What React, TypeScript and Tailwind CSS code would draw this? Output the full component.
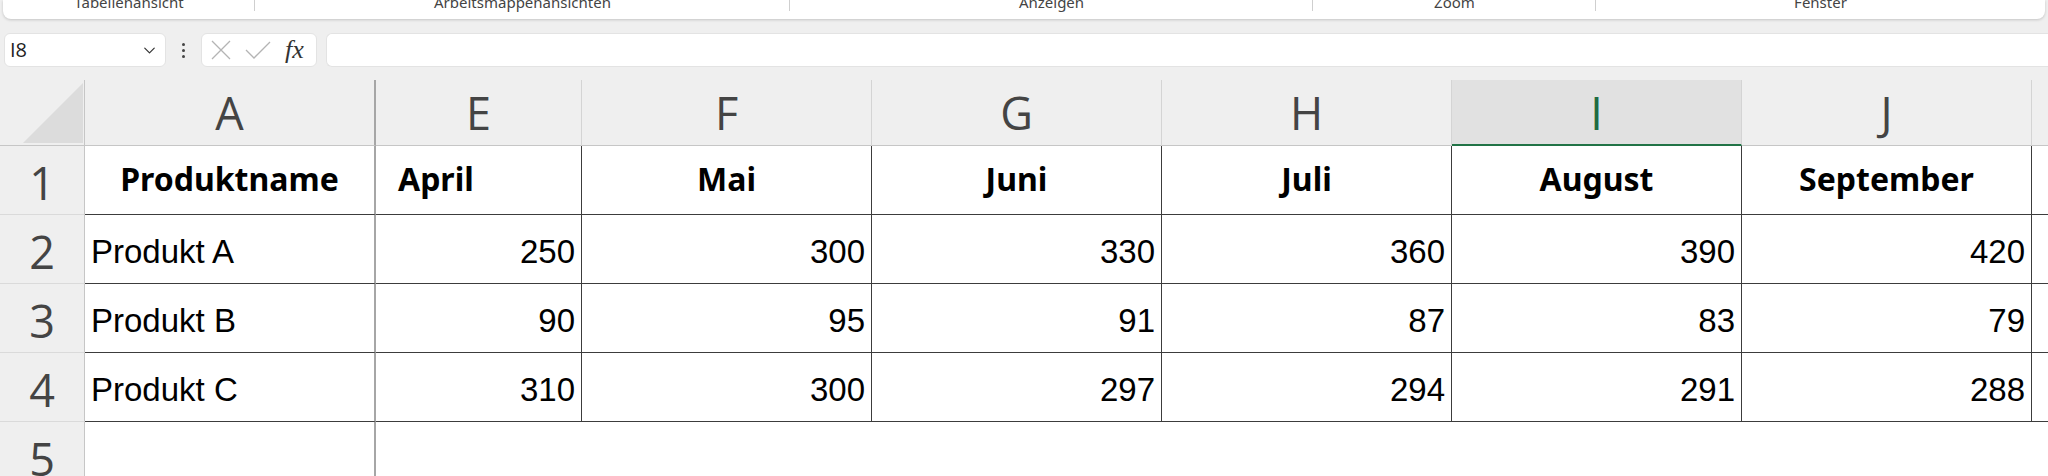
import { ChevronDown } from 'lucide-react';

const cols = [
  { key: 'A', w: 'w-[291px]', sep: 'border-r-2 border-r-[#a6a6a6]' },
  { key: 'E', w: 'w-[206px]', sep: 'border-r border-r-[#d4d4d4]' },
  { key: 'F', w: 'w-[290px]', sep: 'border-r border-r-[#d4d4d4]' },
  { key: 'G', w: 'w-[290px]', sep: 'border-r border-r-[#d4d4d4]' },
  { key: 'H', w: 'w-[290px]', sep: 'border-r border-r-[#d4d4d4]' },
  { key: 'I', w: 'w-[290px]', sep: 'border-r border-r-[#d4d4d4]' },
  { key: 'J', w: 'w-[290px]', sep: 'border-r border-r-[#d4d4d4]' },
];

const months = ['April', 'Mai', 'Juni', 'Juli', 'August', 'September'];

const rows = [
  { name: 'Produkt A', values: [250, 300, 330, 360, 390, 420] },
  { name: 'Produkt B', values: [90, 95, 91, 87, 83, 79] },
  { name: 'Produkt C', values: [310, 300, 297, 294, 291, 288] },
];

const groups = [
  { label: 'Tabellenansicht', w: 'w-[252px]' },
  { label: 'Arbeitsmappenansichten', w: 'w-[535px]' },
  { label: 'Anzeigen', w: 'w-[523px]' },
  { label: 'Zoom', w: 'w-[283px]' },
  { label: 'Fenster', w: 'flex-1' },
];

const cellFont = "font-['Liberation_Sans',Arial,sans-serif] text-[33px] leading-none text-black";
const headFont = "font-['Open_Sans',sans-serif] text-[45px] leading-none";
const boldFont = "font-['Noto_Sans',sans-serif] text-[32px] font-bold leading-none text-black";

function RowHeader({ n, last }: { n: number; last?: boolean }) {
  return (
    <div
      className={`flex w-[85px] shrink-0 items-center justify-center border-r border-r-[#c6c6c6] bg-[#efefef] pt-1 text-[#444] ${headFont} ${
        last ? '' : 'border-b border-b-[#dadada]'
      }`}
    >
      {n}
    </div>
  );
}

export default function App() {
  return (
    <div className="flex h-[476px] w-[2048px] flex-col overflow-hidden bg-[#efefef]">
      {/* ribbon group labels, cut off at the top */}
      <div className="mx-[3px] flex h-[19px] shrink-0 overflow-hidden rounded-b-lg bg-white shadow-[0_1px_3px_rgba(0,0,0,0.18)]">
        {groups.map((g, i) => (
          <div key={g.label} className={`relative flex h-full justify-center ${g.w}`}>
            <span className="-mt-[5px] font-['Noto_Sans',sans-serif] text-[15px] leading-[15px] text-[#444]">
              {g.label}
            </span>
            {i < groups.length - 1 && <div className="absolute right-0 top-0 h-[11px] w-px bg-[#cfcfcf]" />}
          </div>
        ))}
      </div>

      {/* formula bar */}
      <div className="mt-[14px] flex h-[34px] shrink-0 items-stretch pl-[4px]">
        <div className="flex w-[162px] items-center justify-between rounded-md border border-[#e3e3e3] bg-white pl-[5px] pr-[6px]">
          <span className="font-['Open_Sans',sans-serif] text-[20px] text-[#222]">I8</span>
          <ChevronDown size={19} strokeWidth={1.5} className="text-[#333]" />
        </div>
        <div className="flex w-[35px] flex-col items-center justify-center gap-[3px]">
          <span className="h-[3px] w-[3px] rounded-full bg-[#444]" />
          <span className="h-[3px] w-[3px] rounded-full bg-[#444]" />
          <span className="h-[3px] w-[3px] rounded-full bg-[#444]" />
        </div>
        <div className="flex w-[116px] items-center gap-[14px] rounded-md border border-[#e3e3e3] bg-white pl-[9px]">
          <svg width="20" height="20" viewBox="0 0 20 20" className="text-[#b4b4b4]">
            <path d="M1 1 L19 19 M19 1 L1 19" stroke="currentColor" strokeWidth="1.3" fill="none" />
          </svg>
          <svg width="26" height="18" viewBox="0 0 26 18" className="text-[#b4b4b4]">
            <path d="M1 9 L9 17 L25 1" stroke="currentColor" strokeWidth="1.3" fill="none" />
          </svg>
          <span className="font-['Liberation_Serif',serif] text-[26px] italic leading-none text-[#333]">fx</span>
        </div>
        <div className="ml-[9px] flex-1 rounded-l-md border border-r-0 border-[#e3e3e3] bg-white" />
      </div>

      {/* sheet */}
      <div className="mt-[13px] flex flex-col">
        {/* column headers */}
        <div className="flex h-[66px]">
          <div className="flex w-[85px] shrink-0 items-end justify-end border-b border-r border-[#c6c6c6] bg-[#efefef] pb-[2px] pr-[1px]">
            <svg width="60" height="60" viewBox="0 0 60 60">
              <polygon points="60,0 60,60 0,60" fill="#dcdcdc" />
            </svg>
          </div>
          {cols.map((c) => {
            const sel = c.key === 'I';
            return (
              <div
                key={c.key}
                className={`flex shrink-0 items-center justify-center ${c.w} ${c.sep} ${headFont} ${
                  sel
                    ? 'border-b-2 border-b-[#217346] bg-[#e1e1e1] text-[#1e6b41]'
                    : 'border-b border-b-[#c6c6c6] bg-[#efefef] text-[#444]'
                }`}
              >
                {c.key}
              </div>
            );
          })}
          <div className="flex-1 border-b border-b-[#c6c6c6] bg-[#efefef]" />
        </div>

        {/* row 1: month headings */}
        <div className="flex h-[69px]">
          <RowHeader n={1} />
          <div className={`flex w-[291px] shrink-0 items-end justify-center border-b border-r-2 border-b-[#3c3c3c] border-r-[#a6a6a6] bg-white pb-[19px] ${boldFont}`}>
            Produktname
          </div>
          {months.map((m, i) => (
            <div
              key={m}
              className={`flex shrink-0 items-end border-b border-r border-[#3c3c3c] bg-white pb-[19px] ${boldFont} ${
                i === 0 ? 'w-[206px] justify-start pl-[22px]' : 'w-[290px] justify-center'
              }`}
            >
              {m}
            </div>
          ))}
          <div className="flex-1 border-b border-b-[#3c3c3c] bg-white" />
        </div>

        {/* data rows */}
        {rows.map((r, ri) => (
          <div key={r.name} className="flex h-[69px]">
            <RowHeader n={ri + 2} />
            <div className={`flex w-[291px] shrink-0 items-end border-b border-r-2 border-b-[#3c3c3c] border-r-[#a6a6a6] bg-white pb-[15px] pl-[6px] ${cellFont}`}>
              {r.name}
            </div>
            {r.values.map((v, i) => (
              <div
                key={i}
                className={`flex shrink-0 items-end justify-end border-b border-r border-[#3c3c3c] bg-white pb-[15px] pr-[6px] ${cellFont} ${
                  i === 0 ? 'w-[206px]' : 'w-[290px]'
                }`}
              >
                {v}
              </div>
            ))}
            <div className="flex-1 border-b border-b-[#3c3c3c] bg-white" />
          </div>
        ))}

        {/* row 5, empty */}
        <div className="flex h-[69px]">
          <RowHeader n={5} last />
          <div className="w-[291px] shrink-0 border-r-2 border-r-[#a6a6a6] bg-white" />
          <div className="flex-1 bg-white" />
        </div>
      </div>
    </div>
  );
}
